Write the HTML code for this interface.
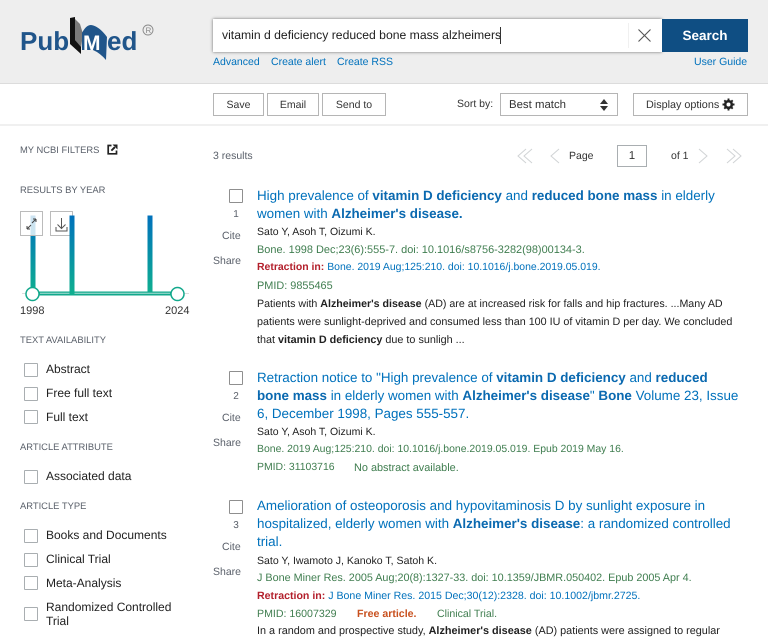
<!DOCTYPE html>
<html><head><meta charset="utf-8"><style>
html,body{margin:0;padding:0;background:#fff}
body{width:768px;height:631px;overflow:hidden;position:relative;font-family:"Liberation Sans",Arial,sans-serif;color:#212121;text-rendering:geometricPrecision}
.a{position:absolute;white-space:nowrap}
.h{font-size:9.4px;color:#5b616b;line-height:14px;left:20px}
.cb{position:absolute;width:12px;height:12px;border:1px solid #a9aeb1;border-radius:1px;background:#fff;left:24px}
.f{position:absolute;left:46px;font-size:12px;line-height:14px;color:#212121;white-space:nowrap}
.ck{position:absolute;left:229px;width:12px;height:12px;border:1px solid #8f8f8f;border-radius:1px;background:#fff}
.n{position:absolute;font-size:10px;color:#5b616b;width:12px;left:230px;text-align:center;line-height:12px}
.s{position:absolute;font-size:10.5px;color:#5b616b;line-height:12px;white-space:nowrap}
.t{position:absolute;left:257px;font-size:13.4px;line-height:18px;color:#0071bc;white-space:nowrap}
.t b{color:#0a69b0}
.l{position:absolute;left:257px;font-size:10.6px;line-height:14px;white-space:nowrap;color:#212121}
.g{color:#3f7d4f}.r{color:#b3202c;font-weight:bold}.u{color:#0071bc}
.btn{position:absolute;top:93px;height:21px;border:1px solid #b5b5b5;background:#fff;font-size:10.5px;line-height:22px;text-align:center;color:#333}
.lk{position:absolute;top:56px;font-size:10.5px;line-height:13px;color:#0071bc;white-space:nowrap}
</style></head><body>
<div class="a" style="left:0;top:0;width:768px;height:83px;background:#eeeeee;border-bottom:1px solid #dcdcdc"></div>
<div class="a" style="left:0;top:124px;width:768px;height:2px;background:#f0f0f0"></div>

<svg class="a" style="left:15px;top:12px" width="145" height="52" viewBox="0 0 145 52">
<text x="5" y="38" font-family="Liberation Sans" font-weight="bold" font-size="26" fill="#20558a">Pub</text>
<text x="92" y="38" font-family="Liberation Sans" font-weight="bold" font-size="26" fill="#20558a">ed</text>
<path d="M60 7 L65 12 L68 22 L66 36 L60 28Z" fill="#7a7a7a"/>
<path d="M55 6 L60 5 L60 28 L66 35 L66 42 L55 32Z" fill="#111"/>
<path d="M67 21 Q71 13 76 13 Q84 14 92 25 L91 48 Q85 41 78 38 L67 38Z" fill="#20558a"/>
<text x="68" y="38" font-family="Liberation Sans" font-weight="bold" font-size="21" fill="#fff">M</text>
<circle cx="133" cy="18" r="5" fill="none" stroke="#8a8a8a" stroke-width="0.9"/>
<text x="130.500" y="21" font-family="Liberation Sans" font-size="8" fill="#8a8a8a">R</text>
</svg>

<div class="a" style="left:213px;top:19px;width:449px;height:33px;background:#fff;box-shadow:0 0 3px rgba(0,0,0,.55)"></div>
<div class="a" style="left:222px;top:28px;font-size:12.2px;line-height:15px;color:#212121">vitamin d deficiency reduced bone mass alzheimers</div>
<div class="a" style="left:500px;top:27px;width:1px;height:17px;background:#333"></div>
<div class="a" style="left:628px;top:23px;width:1px;height:25px;background:#f0f0f0"></div>
<svg class="a" style="left:637px;top:28px" width="15" height="15" viewBox="0 0 15 15"><path d="M1.500 1.500L13.500 13.500M13.500 1.500L1.500 13.500" stroke="#555" stroke-width="1.100" fill="none"/></svg>
<div class="a" style="left:662px;top:19px;width:86px;height:33px;background:#0f4e83;color:#fff;font-weight:bold;font-size:13.500px;line-height:33px;text-align:center">Search</div>
<div class="lk" style="left:213px">Advanced</div>
<div class="lk" style="left:271px">Create alert</div>
<div class="lk" style="left:337px">Create RSS</div>
<div class="lk" style="left:694px">User Guide</div>

<div class="btn" style="left:213px;width:49px">Save</div>
<div class="btn" style="left:267px;width:50px">Email</div>
<div class="btn" style="left:322px;width:62px">Send to</div>
<div class="a" style="left:457px;top:98px;font-size:10.500px;line-height:13px;color:#333">Sort by:</div>
<div class="btn" style="left:500px;width:116px;text-align:left;font-size:11.400px"><span style="margin-left:8px">Best match</span></div>
<svg class="a" style="left:598px;top:98px" width="12" height="14" viewBox="0 0 12 14"><path d="M6 1L10 6H2ZM2 8H10L6 13Z" fill="#333"/></svg>
<div class="btn" style="left:633px;width:113px;text-align:left;font-size:10.800px"><span style="margin-left:12px">Display options</span></div>
<svg class="a" style="left:722px;top:98px" width="13" height="13" viewBox="0 0 13 13"><circle cx="6.500" cy="6.500" r="3.400" fill="none" stroke="#222" stroke-width="2.400"/><path d="M6.500 0.500V12.500M0.500 6.500H12.500M2.300 2.300L10.700 10.700M10.700 2.300L2.300 10.700" stroke="#222" stroke-width="1.900"/><circle cx="6.500" cy="6.500" r="2" fill="#fff"/></svg>

<div class="a h" style="top:143px">MY NCBI FILTERS</div>
<svg class="a" style="left:107px;top:144px" width="11" height="11" viewBox="0 0 11 11"><path d="M4.500 1.500H1.200V9.800H9.500V6.500" fill="none" stroke="#222" stroke-width="1.700"/><path d="M5.500 0.500H10.500V5.500ZM7.500 2L3.700 6 5 7.300 9 3.500Z" fill="#222"/></svg>
<div class="a h" style="top:183px">RESULTS BY YEAR</div>

<svg class="a" style="left:18px;top:205px" width="176" height="100" viewBox="0 0 176 100">
<defs><linearGradient id="gr" x1="0" y1="0" x2="0" y2="1"><stop offset="0" stop-color="#0071bc"/><stop offset="1" stop-color="#0fb08f"/></linearGradient></defs>
<rect x="12.500" y="10.500" width="5" height="79" fill="url(#gr)"/>
<rect x="129.500" y="10.500" width="5" height="79" fill="url(#gr)"/>
<rect x="14" y="86.500" width="145" height="4" fill="#12a88c"/>
<rect x="22" y="87.800" width="130" height="0.800" fill="#d5eee8"/>
<rect x="4" y="88" width="8" height="1" fill="#ddd"/><rect x="165" y="88" width="6" height="1" fill="#ddd"/>
<circle cx="14.500" cy="89" r="6.500" fill="#fff" stroke="#12a88c" stroke-width="1.500"/>
<circle cx="159.500" cy="89" r="6.500" fill="#fff" stroke="#12a88c" stroke-width="1.500"/>
<rect x="2.500" y="6.500" width="22" height="24" fill="#fff" fill-opacity="0.8" stroke="#bbb"/>
<rect x="32.500" y="6.500" width="22" height="24" fill="#fff" stroke="#bbb"/>
<rect x="51.500" y="10.500" width="5" height="79" fill="url(#gr)"/>
<path d="M9 24L13 20M9 24V21M9 24H12M18 14L14 18M18 14V17M18 14H15" stroke="#444" fill="none" stroke-width="1"/>
<path d="M43.500 13V23M39.500 19.500L43.500 23.500 47.500 19.500M38 22V26H49V22" stroke="#555" fill="none" stroke-width="1"/>
</svg>
<div class="a" style="left:20px;top:304px;font-size:11px;line-height:14px;color:#333">1998</div>
<div class="a" style="left:165px;top:304px;font-size:11px;line-height:14px;color:#333">2024</div>

<div class="a h" style="top:333px">TEXT AVAILABILITY</div>
<div class="cb" style="top:363px"></div><div class="f" style="top:362px">Abstract</div>
<div class="cb" style="top:387px"></div><div class="f" style="top:386px">Free full text</div>
<div class="cb" style="top:410px"></div><div class="f" style="top:410px">Full text</div>
<div class="a h" style="top:440px">ARTICLE ATTRIBUTE</div>
<div class="cb" style="top:470px"></div><div class="f" style="top:469px">Associated data</div>
<div class="a h" style="top:499px">ARTICLE TYPE</div>
<div class="cb" style="top:529px"></div><div class="f" style="top:528px">Books and Documents</div>
<div class="cb" style="top:553px"></div><div class="f" style="top:552px">Clinical Trial</div>
<div class="cb" style="top:576px"></div><div class="f" style="top:576px">Meta-Analysis</div>
<div class="cb" style="top:607px"></div><div class="f" style="top:600px">Randomized Controlled</div><div class="f" style="top:614px">Trial</div>

<div class="a" style="left:213px;top:150px;font-size:10.500px;line-height:13px;color:#5b616b">3 results</div>
<svg class="a" style="left:515px;top:147px" width="235" height="18" viewBox="0 0 235 18" fill="none" stroke="#d0d3d5" stroke-width="1">
<path d="M11 2L3 9L11 16M17 2L9 9L17 16"/><path d="M44 2L36 9L44 16"/>
<path d="M184 2L192 9L184 16"/><path d="M212 2L220 9L212 16M218 2L226 9L218 16"/></svg>
<div class="a" style="left:569px;top:150px;font-size:10.500px;line-height:13px;color:#333">Page</div>
<div class="a" style="left:617px;top:145px;width:28px;height:20px;border:1px solid #a9aeb1;text-align:center;font-size:11.500px;line-height:20px;color:#333">1</div>
<div class="a" style="left:671px;top:150px;font-size:10.500px;line-height:13px;color:#333">of 1</div>

<div class="ck" style="top:189px"></div><div class="n" style="top:209px">1</div>
<div class="s" style="left:222px;top:230px">Cite</div><div class="s" style="left:213px;top:255px">Share</div>
<div class="t" style="top:187px">High prevalence of <b>vitamin D deficiency</b> and <b>reduced bone mass</b> in elderly</div>
<div class="t" style="top:205px">women with <b>Alzheimer's disease.</b></div>
<div class="l" style="top:225px;font-size:10.500px">Sato Y, Asoh T, Oizumi K.</div>
<div class="l g" style="top:243px;font-size:10.950px">Bone. 1998 Dec;23(6):555-7. doi: 10.1016/s8756-3282(98)00134-3.</div>
<div class="l" style="top:261px;font-size:10.450px"><span class="r">Retraction in:</span> <span class="u">Bone. 2019 Aug;125:210. doi: 10.1016/j.bone.2019.05.019.</span></div>
<div class="l g" style="top:279px;font-size:10.900px">PMID: 9855465</div>
<div class="l" style="top:297px;font-size:10.650px">Patients with <b>Alzheimer's disease</b> (AD) are at increased risk for falls and hip fractures. ...Many AD</div>
<div class="l" style="top:315px;font-size:10.780px">patients were sunlight-deprived and consumed less than 100 IU of vitamin D per day. We concluded</div>
<div class="l" style="top:333px;font-size:10.800px">that <b>vitamin D deficiency</b> due to sunligh ...</div>

<div class="ck" style="top:371px"></div><div class="n" style="top:391px">2</div>
<div class="s" style="left:222px;top:412px">Cite</div><div class="s" style="left:213px;top:437px">Share</div>
<div class="t" style="top:369px">Retraction notice to "High prevalence of <b>vitamin D deficiency</b> and <b>reduced</b></div>
<div class="t" style="top:387px"><b>bone mass</b> in elderly women with <b>Alzheimer's disease</b>" <b>Bone</b> Volume 23, Issue</div>
<div class="t" style="top:405px">6, December 1998, Pages 555-557.</div>
<div class="l" style="top:425px;font-size:10.500px">Sato Y, Asoh T, Oizumi K.</div>
<div class="l g" style="top:443px;font-size:10.450px">Bone. 2019 Aug;125:210. doi: 10.1016/j.bone.2019.05.019. Epub 2019 May 16.</div>
<div class="l g" style="top:461px;font-size:10.450px">PMID: 31103716</div><div class="l g" style="left:354px;top:461px;font-size:10.900px">No abstract available.</div>

<div class="ck" style="top:500px"></div><div class="n" style="top:520px">3</div>
<div class="s" style="left:222px;top:541px">Cite</div><div class="s" style="left:213px;top:566px">Share</div>
<div class="t" style="top:497px">Amelioration of osteoporosis and hypovitaminosis D by sunlight exposure in</div>
<div class="t" style="top:515px">hospitalized, elderly women with <b>Alzheimer's disease</b>: a randomized controlled</div>
<div class="t" style="top:533px">trial.</div>
<div class="l" style="top:554px;font-size:10.550px">Sato Y, Iwamoto J, Kanoko T, Satoh K.</div>
<div class="l g" style="top:571px;font-size:10.800px">J Bone Miner Res. 2005 Aug;20(8):1327-33. doi: 10.1359/JBMR.050402. Epub 2005 Apr 4.</div>
<div class="l" style="top:589px"><span class="r">Retraction in:</span> <span class="u">J Bone Miner Res. 2015 Dec;30(12):2328. doi: 10.1002/jbmr.2725.</span></div>
<div class="l g" style="top:607px">PMID: 16007329</div><div class="l" style="left:357px;top:607px;color:#c8501e;font-weight:bold">Free article.</div><div class="l g" style="left:437px;top:607px">Clinical Trial.</div>
<div class="l" style="top:624px;font-size:10.850px">In a random and prospective study, <b>Alzheimer's disease</b> (AD) patients were assigned to regular</div>
</body></html>
